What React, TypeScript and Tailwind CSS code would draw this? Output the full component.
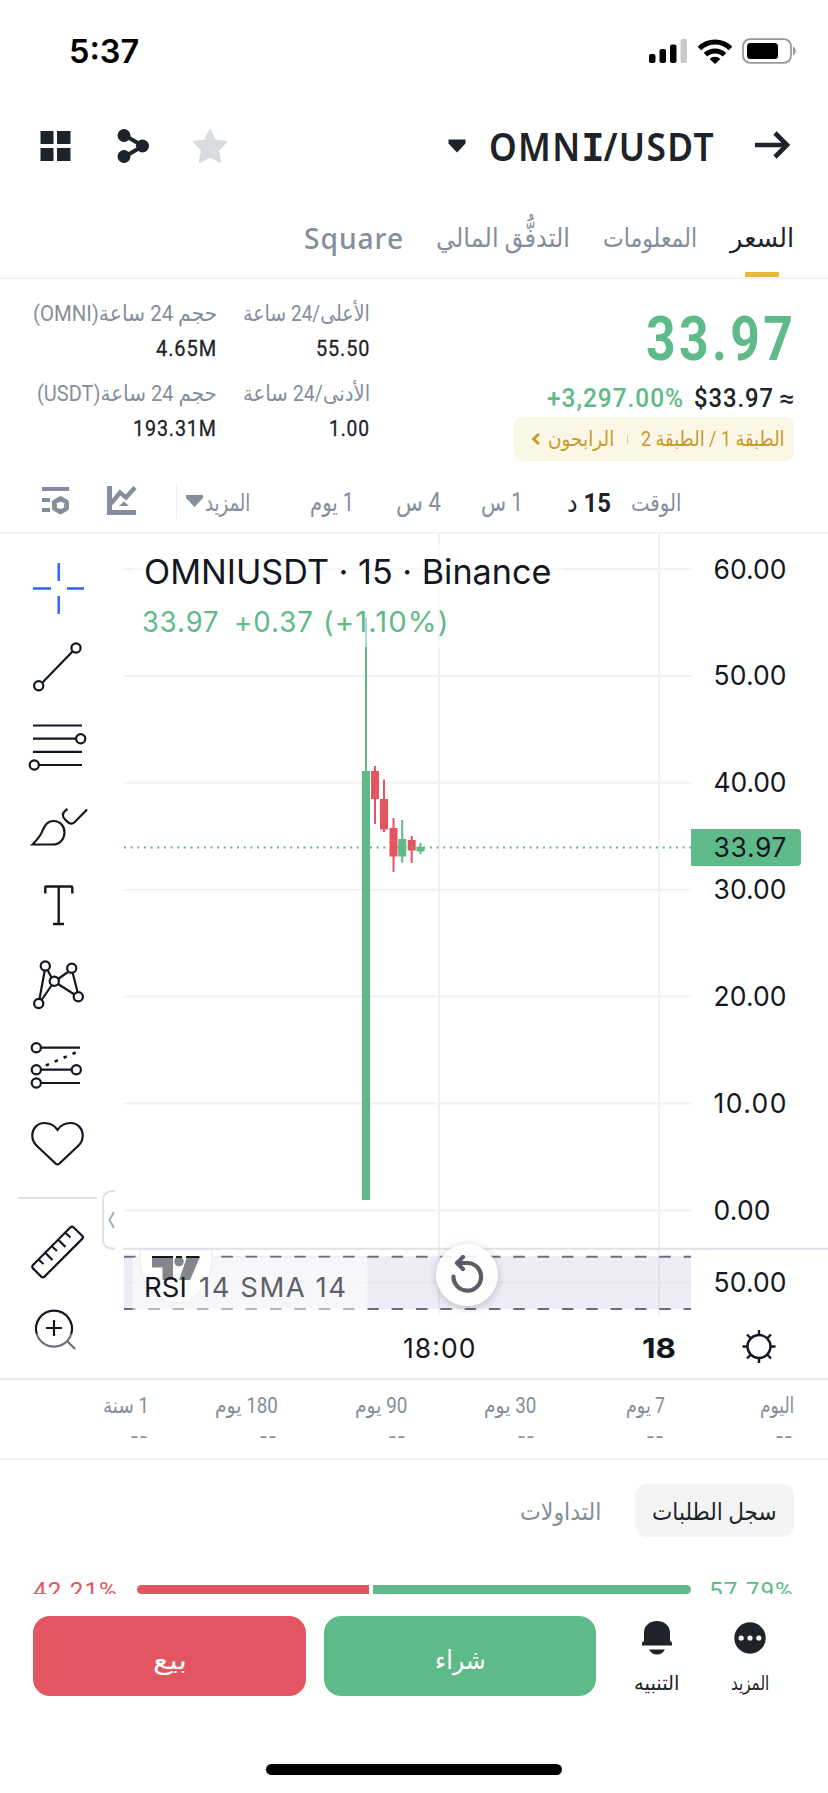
import { useLayoutEffect, useRef, type ReactNode } from "react";

/** Text condensed or widened so that it fills the width of its box. */
function Fit({ className, rtl, children }: { className: string; rtl?: boolean; children: ReactNode }) {
  const box = useRef<HTMLSpanElement>(null);
  const inner = useRef<HTMLSpanElement>(null);
  useLayoutEffect(() => {
    if (!box.current || !inner.current) return;
    const natural = inner.current.offsetWidth;
    if (natural > 0) inner.current.style.transform = `scaleX(${box.current.clientWidth / natural})`;
  });
  return (
    <span ref={box} className={`block shrink-0 whitespace-nowrap ${className}`}>
      <span ref={inner} dir={rtl ? "rtl" : "ltr"} className="inline-block origin-left">
        {children}
      </span>
    </span>
  );
}

function StatusBar() {
  return (
    <div className="flex h-[102px] items-center pl-[69px] pr-[32px] text-black">
      <Fit className="w-[70px] font-['Inter'] text-[33px] font-semibold leading-[40px]">5:37</Fit>
      <svg className="ml-auto h-[26px] w-[148px]" viewBox="648 38 148 26">
        <rect x="649" y="54" width="6.5" height="9" rx="2" />
        <rect x="659.5" y="49" width="6.5" height="14" rx="2" />
        <rect x="670" y="44.500" width="6.5" height="18.500" rx="2" />
        <rect x="680.500" y="39" width="6.500" height="24" rx="2" fill="#c9c9c9" />
        <g fill="none" stroke="#000" strokeWidth="5">
          <path d="M699.500 48.500a22 22 0 0 1 31 0" />
          <path d="M705.500 54.800a13.500 13.500 0 0 1 19 0" />
        </g>
        <path d="M709.600 59a7.600 7.600 0 0 1 10.800 0l-5.400 5z" />
        <rect x="743" y="39.200" width="48" height="23.600" rx="7" fill="none" stroke="#999" strokeWidth="1.800" />
        <rect x="747" y="43" width="31" height="16" rx="3.500" />
        <path d="M793 46.500c3.500 1.500 3.500 7.500 0 9z" fill="#999" />
      </svg>
    </div>
  );
}

function Header() {
  return (
    <div className="flex h-[87px] items-center pl-[40px] pr-[38px] text-[#1e2329]">
      <svg className="h-[36px] w-[190px]" viewBox="40 128 190 36" fill="#1e2329">
        <path d="M40.500 131h13v13h-13zM57 131h13.500v13H57zM40.500 148h13v13h-13zM57 148h13.500v13H57z" />
        <path d="M124 135l19 11-19 11" fill="none" stroke="#1e2329" strokeWidth="4" />
        <circle cx="124" cy="135.500" r="6.500" />
        <circle cx="142.500" cy="146" r="6.500" />
        <circle cx="124" cy="156.500" r="6.500" />
        <path
          d="M210 130l5 10.500 11 1.500-8 8 2.200 11.800L210 156.500l-10.200 5.300L202 150l-8-8 11-1.500z"
          fill="#d8dbe0"
          stroke="#d8dbe0"
          strokeWidth="2"
          strokeLinejoin="round"
        />
      </svg>
      <svg className="ml-auto h-[14px] w-[18px]" viewBox="0 0 18 14">
        <path d="M.500 .5h17v4L9 13.500.500 4.500z" fill="#1e2329" />
      </svg>
      <Fit className="ml-[23px] w-[226px] font-['Noto_Sans'] text-[39px] font-semibold leading-[48px] tracking-[1.500px]">
        OMN<span className="font-['Liberation_Mono'] text-[42px] font-bold leading-[40px] tracking-[-1px]">I</span>/USDT
      </Fit>
      <svg className="ml-[40px] mb-[2px] h-[28px] w-[35px]" viewBox="0 0 35 28" fill="none" stroke="#1e2329" strokeWidth="4.600">
        <path d="M0 14h31M20 2l12 12-12 12" />
      </svg>
    </div>
  );
}

function PageTabs() {
  return (
    <div className="flex h-[90px] border-b-2 border-[#f3f4f5] pl-[304px] pr-[34px] text-[#848e9c]">
      <Fit className="mt-[28px] w-[100px] font-['Noto_Sans'] text-[29px] font-medium leading-[42px] tracking-[1px]">Square</Fit>
      <Fit rtl className="ml-[32px] mt-[28px] w-[134px] text-[26px] leading-[42px]">التدفُّق المالي</Fit>
      <Fit rtl className="ml-[33px] mt-[28px] w-[94px] text-[26px] leading-[42px]">المعلومات</Fit>
      <div className="ml-[33px] flex w-[64px] flex-col items-center">
        <Fit rtl className="mt-[28px] w-[64px] text-[26px] leading-[42px] text-[#1e2329]">السعر</Fit>
        <span className="mt-[13px] h-[6px] w-[34px] bg-[#e8b93f]" />
      </div>
    </div>
  );
}

function Stat({ label, value, labelWidth, valueWidth }: { label: string; value: string; labelWidth: string; valueWidth: string }) {
  return (
    <div className="flex h-[79.500px] flex-col items-end">
      <Fit rtl className={`${labelWidth} text-[22px] leading-[34px] text-[#848e9c]`}>{label}</Fit>
      <Fit className={`${valueWidth} mt-[1px] text-[22px] leading-[34px] tracking-[1px] text-[#1e2329] [-webkit-text-stroke:0.3px_#1e2329]`}>{value}</Fit>
    </div>
  );
}

function Summary() {
  return (
    <div className="flex h-[190px] pl-[34px] pr-[34px]">
      <div className="flex w-[183px] flex-col pt-[18px]">
        <Stat label="حجم 24 ساعة(OMNI)" value="4.65M" labelWidth="w-[184px]" valueWidth="w-[61px]" />
        <Stat label="حجم 24 ساعة(USDT)" value="193.31M" labelWidth="w-[180px]" valueWidth="w-[84px]" />
      </div>
      <div className="ml-[26px] flex w-[127px] flex-col pt-[18px]">
        <Stat label="الأعلى/24 ساعة" value="55.50" labelWidth="w-[127px]" valueWidth="w-[54px]" />
        <Stat label="الأدنى/24 ساعة" value="1.00" labelWidth="w-[127px]" valueWidth="w-[41px]" />
      </div>
      <div className="ml-auto flex flex-col items-end">
        <Fit className="mr-[-2px] mt-[23px] w-[150px] text-[62px] font-bold leading-[74px] tracking-[4px] text-[#5fba89]">33.97</Fit>
        <div className="mt-[6px] flex items-center font-medium">
          <Fit className="w-[137px] text-[25px] leading-[34px] tracking-[1px] text-[#5fba89]">+3,297.00%</Fit>
          <Fit className="ml-[10px] w-[80px] text-[25px] leading-[34px] tracking-[1px] text-[#1e2329]">$33.97</Fit>
          <Fit className="ml-[5px] w-[15px] text-[25px] leading-[34px] text-[#1e2329]">≈</Fit>
        </div>
        <div className="mt-[1px] flex h-[44px] w-[280px] items-center rounded-[8px] bg-[#fbf7e6] pl-[17px] text-[#c99a2c]">
          <svg className="h-[12px] w-[9px]" viewBox="0 0 9 12" fill="none" stroke="#c99a2c" strokeWidth="2.800">
            <path d="M8 1L2.500 6 8 11" />
          </svg>
          <Fit rtl className="ml-[8px] w-[66px] text-[21px] leading-[34px]">الرابحون</Fit>
          <span className="ml-[13px] h-[9px] w-px bg-[#e2cd95]" />
          <Fit rtl className="ml-[13px] w-[144px] text-[21px] leading-[34px]">الطبقة 1 / الطبقة 2</Fit>
        </div>
      </div>
    </div>
  );
}

function Intervals() {
  return (
    <div className="flex h-[65px] items-center border-b-2 border-[#f3f4f5] pl-[41px] text-[#848e9c]">
      <svg className="h-[30px] w-[96px]" viewBox="41 487 96 30">
        <path d="M42 488h27v4H42zM42 499h8v4h-8zM42 509h8v4h-8z" fill="#848e9c" />
        <path d="M60.500 499.500l6 3.500v6.500l-6 3.500-6-3.500V503z" fill="none" stroke="#848e9c" strokeWidth="4.800" strokeLinejoin="round" />
        <path d="M109.500 487v26.500H136" fill="none" stroke="#848e9c" strokeWidth="5" />
        <path d="M111 504.500l9-11 6 5 9-10" fill="none" stroke="#848e9c" strokeWidth="4.400" />
        <path d="M124 502.500l5 4.500h-10z" fill="#848e9c" />
      </svg>
      <span className="ml-[39px] h-[36px] w-px bg-[#eceef0]" />
      <svg className="ml-[9px] h-[12px] w-[17px]" viewBox="0 0 17 12">
        <path d="M0 0h17v3l-8.500 9L0 3z" fill="#848e9c" />
      </svg>
      <div className="flex pt-[5px]">
        <Fit rtl className="ml-[2px] w-[45px] text-[24px] leading-[34px]">المزيد</Fit>
        <Fit rtl className="ml-[60px] w-[44px] text-[25px] leading-[34px]">1 يوم</Fit>
        <Fit rtl className="ml-[42px] w-[45px] text-[25px] leading-[34px]">4 س</Fit>
        <Fit rtl className="ml-[40px] w-[42px] text-[25px] leading-[34px]">1 س</Fit>
        <Fit rtl className="ml-[44px] w-[44px] text-[26px] leading-[34px] text-[#1e2329]">
          <b className="font-bold">15</b> د
        </Fit>
        <Fit rtl className="ml-[20px] w-[50px] text-[24px] leading-[34px]">الوقت</Fit>
      </div>
    </div>
  );
}

const INK = "#131722";

function Toolbar() {
  return (
    <div className="flex w-[123px] pt-[15px]">
      <div className="flex w-[97px] flex-col">
        <svg className="h-[80px] w-[97px]" viewBox="0 549 97 80" stroke="#2962ff" strokeWidth="2.400">
          <path d="M33 588.500h18M67 588.500h17M58.700 563v18M58.700 596v18" />
        </svg>
        <svg className="h-[77px] w-[97px]" viewBox="0 629 97 77" fill="none" stroke={INK} strokeWidth="2.200">
          <path d="M42.500 682.500l30-31" />
          <circle cx="76" cy="648" r="4.600" />
          <circle cx="38.700" cy="685.700" r="4.600" />
        </svg>
        <svg className="h-[80px] w-[97px]" viewBox="0 706 97 80" fill="none" stroke={INK} strokeWidth="2.200">
          <path d="M33 725.500h49M33 738.700h43M33 751.800h49M39 765h43" />
          <circle cx="80.700" cy="738.700" r="4.600" />
          <circle cx="34.300" cy="765" r="4.600" />
        </svg>
        <svg className="h-[80px] w-[97px]" viewBox="0 786 97 80" fill="none" stroke={INK} strokeWidth="2.200">
          <path d="M32.500 844.500c4-4 8.500-9 10.500-15 2.200-5.500 6-8.500 10.500-8.500 6.500 0 11 5 11 11.500s-5 12-11.500 12z" />
          <path d="M67.500 809c-4 2.500-5.500 5.500-4 8.500 1.500 2.500 3.500 4 5.500 5.500 2 1 3.800.800 5.500-.700L87 809.500" />
        </svg>
        <svg className="h-[78px] w-[97px]" viewBox="0 866 97 78" fill="none" stroke={INK} strokeWidth="2.400">
          <path d="M45.300 893.500v-6q0-1 1-1h25q1 0 1 1v6M58.700 886.500v37.500M53 924h11" />
        </svg>
        <svg className="h-[80px] w-[97px]" viewBox="0 944 97 80" fill="none" stroke={INK} strokeWidth="2.200">
          <path d="M44.700 970.500L39.500 999M47.500 970l4 7.500M51.500 985.500L41.500 1000M58 979l10-7M72.700 973l5 19.500M58 984l16.500 10.500" />
          <circle cx="45.300" cy="966" r="4.600" />
          <circle cx="71.700" cy="968.300" r="4.600" />
          <circle cx="54.300" cy="981.300" r="4.600" />
          <circle cx="38.700" cy="1003.500" r="4.600" />
          <circle cx="78.300" cy="996.800" r="4.600" />
        </svg>
        <svg className="h-[80px] w-[97px]" viewBox="0 1024 97 80" fill="none" stroke={INK} strokeWidth="2.200">
          <path d="M41 1047.700h39M41 1069.700h30.500M41 1083h39" />
          <path d="M45.800 1065.500l30-13" strokeWidth="2.600" strokeDasharray="3.500 6.200" />
          <circle cx="36.300" cy="1047.700" r="4.600" />
          <circle cx="36.300" cy="1069.700" r="4.600" />
          <circle cx="76.300" cy="1069.700" r="4.600" />
          <circle cx="36.300" cy="1083" r="4.600" />
        </svg>
        <svg className="h-[93px] w-[97px]" viewBox="0 1104 97 93" fill="none" stroke={INK} strokeWidth="2.200">
          <path d="M57.500 1129.800C54 1125 49.500 1123 44.500 1123c-7 0-12.200 5.500-12.200 12.500 0 4 1.700 7.500 4.200 10l19 18q2 2 4 0l19-18c2.700-2.500 4.200-6 4.200-10 0-7-5.200-12.500-12.200-12.500-5 0-9.500 2-13 6.800z" />
        </svg>
        <span className="ml-[18px] h-[2px] w-[79px] bg-[#dfe1e7]" />
        <svg className="h-[91px] w-[97px]" viewBox="0 1199 97 91" fill="none" stroke={INK} strokeWidth="2.200">
          <path d="M70.200 1227.500q1.800-1.500 3.500 0l8.500 8.200q1.500 1.600 0 3.200l-37.700 37.700q-1.700 1.500-3.300 0l-8.200-8.200q-1.500-1.700 0-3.400z" />
          <path d="M38.500 1259.500l5 4.500M45.500 1253l7 7M52 1246.500l5 4.500M58.500 1240l7 7M65.500 1233l5 4.500" />
        </svg>
        <svg className="h-[72px] w-[97px]" viewBox="0 1290 97 72" fill="none" stroke={INK} strokeWidth="2.200">
          <path d="M46 1328h16M54 1320v16" />
          <path d="M36.800 1334a18 18 0 1 1 34.400 0" />
          <path d="M36.800 1334a18 18 0 0 0 34.400 0M67 1341l8 8" stroke="#6c6f77" />
        </svg>
      </div>
      <svg className="ml-[4px] mt-[640px] h-[62px] w-[16px]" viewBox="101 1189 16 62" fill="none">
        <path d="M115 1191h-3q-9 1-9 9v40q0 8 9 8.500h3" stroke="#dfe1e7" strokeWidth="2" />
        <path d="M114 1212l-4.500 8 4.500 8" stroke="#9fb0bd" strokeWidth="2" />
      </svg>
    </div>
  );
}

const PRICES = ["60.00", "50.00", "40.00", "30.00", "20.00", "10.00", "0.00"];
const UP = "#5fba89";
const DOWN = "#e25561";
const CANDLES = [
  { x: 366, high: 618, low: 771, top: 771, bottom: 1200, color: UP },
  { x: 375, high: 766, low: 824, top: 771, bottom: 799, color: DOWN },
  { x: 384, high: 779.5, low: 832, top: 799, bottom: 829.5, color: DOWN },
  { x: 393.5, high: 818, low: 872, top: 828, bottom: 856.5, color: DOWN },
  { x: 402.2, high: 820, low: 862.5, top: 839, bottom: 856.5, color: UP },
  { x: 411.7, high: 836, low: 863, top: 840, bottom: 850.5, color: DOWN },
  { x: 420.5, high: 843, low: 854, top: 847, bottom: 851.5, color: UP },
];

function Chart() {
  return (
    <svg className="h-[844px] w-[705px] font-['Inter']" viewBox="123 534 705 844" fontSize="26.500">
      <g stroke="#f0f1f3" strokeWidth="2">
        {PRICES.map((p, i) => (
          <path key={p} d={`M124 ${569 + i * 106.9}H691`} />
        ))}
        <path d="M439 534V1315M659 534V1315" />
      </g>
      <rect x="124" y="1256" width="567" height="53" fill="#9c88cf" opacity=".16" />
      <path d="M124 1282.500H691" stroke="#e6e4ec" strokeWidth="1.500" />
      <g stroke="#6e6c7a" strokeWidth="2" strokeDasharray="11.500 12.830">
        <path d="M124 1256.700H691" />
        <path d="M124 1309H691" />
      </g>
      <rect x="132.500" y="1257.500" width="235" height="53" fill="#fff" opacity=".5" />
      <path d="M140.500 1249.500h71c4 27-12 53.500-35.500 53.500s-39.500-26.500-35.500-53.500z" fill="#fff" stroke="#f0eff3" strokeWidth="1.800" />
      <path d="M152 1257h21v23h-10.500v-12.500H152zM187 1257h13l-10 23h-11z" fill="#85868c" />
      <circle cx="179" cy="1261.500" r="4.800" fill="#85868c" />
      <path d="M152 1257h21M176 1257h6M186 1257h13.500" stroke={INK} strokeWidth="2" />
      <path d="M123 1248.700H828" stroke="#dfe1e9" strokeWidth="2" />
      <g fill={INK}>
        <text x="144" y="1297" fontSize="27.500" textLength="43">RSI</text>
        <text x="199" y="1297" fontSize="27.500" textLength="147" fill="#5d6068">14 SMA 14</text>
      </g>
      <path d="M124 847.500H691" stroke={UP} strokeWidth="2" strokeDasharray="2 4.650" />
      {CANDLES.map((c) => (
        <g key={c.x}>
          <path d={`M${c.x} ${c.high}V${c.low}`} stroke={c.color} strokeWidth="2" />
          <rect x={c.x - 4} y={c.top} width="8" height={c.bottom - c.top} fill={c.color} />
        </g>
      ))}
      <path d="M398 847.500h27" stroke={UP} strokeWidth="2" strokeDasharray="2 4.650" />
      <path d="M691 829h106q4 0 4 4v29q0 4-4 4H691z" fill={UP} />
      <g fill={INK}>
        {PRICES.map((p, i) => (
          <text key={p} x="713.500" y={578.5 + i * 106.9} textLength={p.length === 5 ? 73 : 57}>{p}</text>
        ))}
        <text x="713.500" y="857" textLength="73">33.97</text>
        <text x="713.500" y="1292" textLength="73">50.00</text>
        <text x="403" y="1358" textLength="72.500">18:00</text>
        <text x="642" y="1358" fontSize="27.500" textLength="34" lengthAdjust="spacingAndGlyphs" fontWeight="700">18</text>
      </g>
      <g fill="none" stroke={INK} strokeWidth="2.400">
        <circle cx="759" cy="1346.500" r="11.500" />
        <path d="M759 1335v-5M759 1358v5M747.500 1346.500h-5M770.500 1346.500h5M751 1338.500l-4-4M767 1338.500l4-4M751 1354.500l-4 4M767 1354.500l4 4" />
      </g>
    </svg>
  );
}

function ChartPanel() {
  return (
    <div className="relative flex h-[846px] border-b-2 border-[#e6e8ed]">
      <Toolbar />
      <Chart />
      <div className="absolute left-[132px] top-[11px] h-[52px] bg-white/50 pl-[12px] pr-[12px] pt-[5px] text-[#131722]">
        <Fit className="w-[407px] font-['Inter'] text-[34px] leading-[44px]">OMNIUSDT · 15 · Binance</Fit>
      </div>
      <div className="absolute left-[132px] top-[63px] flex h-[50px] bg-white/50 pl-[10px] pr-[10px] pt-[6px] font-['Inter'] text-[28px] leading-[38px] text-[#5fba89]">
        <Fit className="w-[78px] tracking-[1px]">33.97</Fit>
        <Fit className="ml-[14px] w-[80px] tracking-[1px]">+0.37</Fit>
        <Fit className="ml-[9px] w-[127px] tracking-[1px]">(+1.10%)</Fit>
      </div>
      <div className="absolute left-[436px] top-[710px] flex h-[62px] w-[62px] items-center justify-center rounded-full bg-white/90 shadow-[0_2px_8px_rgba(0,0,0,0.22)]">
        <svg className="h-[40px] w-[36px]" viewBox="0 0 36 40" fill="none" stroke="#5a5c66" strokeWidth="4.200" strokeLinecap="round" strokeLinejoin="round">
          <path d="M4.500 21.500a13.800 13.800 0 1 0 13.800-13.500H8M14 2L8 8l6 6" />
        </svg>
      </div>
    </div>
  );
}

const PERIODS = [
  { label: "1 سنة", width: "w-[46px]" },
  { label: "180 يوم", width: "w-[63px]" },
  { label: "90 يوم", width: "w-[52px]" },
  { label: "30 يوم", width: "w-[52px]" },
  { label: "7 يوم", width: "w-[39px]" },
  { label: "اليوم", width: "w-[34px]" },
];

function Periods() {
  return (
    <div className="grid h-[80px] grid-cols-6 border-b-2 border-[#eff0f2] pl-[20px] pr-[34px] text-[#848e9c]">
      {PERIODS.map((p) => (
        <div key={p.label} className="flex flex-col items-end">
          <Fit rtl className={`${p.width} mt-[9px] text-[22px] leading-[34px]`}>{p.label}</Fit>
          <Fit className="mt-[2px] w-[18px] text-[22px] leading-[24px] tracking-[2px]">--</Fit>
        </div>
      ))}
    </div>
  );
}

function Orders() {
  return (
    <div className="h-[134px] overflow-hidden">
      <div className="flex justify-end pr-[34px] pt-[24px]">
        <Fit rtl className="mr-[34px] mt-[10px] w-[81px] text-[24px] leading-[36px] text-[#848e9c]">التداولات</Fit>
        <div className="flex h-[53px] w-[159px] justify-center rounded-[12px] bg-[#f4f4f5]">
          <Fit rtl className="mt-[10px] w-[125px] text-[24px] leading-[36px] text-[#1e2329]">سجل الطلبات</Fit>
        </div>
      </div>
      <div className="mt-[35px] flex h-[40px] pl-[33px] pr-[34px] text-[24px] leading-[38px]">
        <Fit className="w-[85px] tracking-[1px] text-[#e25561]">42.21%</Fit>
        <span className="ml-[19px] mt-[13px] h-[9px] w-[232px] rounded-l-full bg-[#e25561]" />
        <span className="ml-[4px] mt-[13px] h-[9px] w-[318px] rounded-r-full bg-[#5fba89]" />
        <Fit className="ml-[18px] w-[85px] tracking-[1px] text-[#5fba89]">57.79%</Fit>
      </div>
    </div>
  );
}

function ActionBar() {
  return (
    <div className="flex h-[170px] pl-[33px] pt-[22px]">
      <div className="flex h-[80px] w-[273px] justify-center rounded-[17px] bg-[#e25561]">
        <Fit rtl className="mt-[24px] w-[34px] text-[26px] leading-[40px] text-white">بيع</Fit>
      </div>
      <div className="ml-[18px] flex h-[80px] w-[272px] justify-center rounded-[17px] bg-[#5fba89]">
        <Fit rtl className="mt-[24px] w-[51px] text-[26px] leading-[40px] text-white">شراء</Fit>
      </div>
      <div className="ml-[37px] flex w-[47px] flex-col items-center pt-[4px]">
        <svg className="h-[36px] w-[32px]" viewBox="0 0 32 36" fill="#1e2329">
          <path d="M3 12.500C3 5.500 9 1 16 1s13 4.500 13 11.500v8.500l2 1.500v3H1v-3L3 21zM8 29.500h16c-1.500 3-4.500 5-8 5s-6.500-2-8-5z" />
        </svg>
        <Fit rtl className="mt-[12px] w-[46px] text-[20px] leading-[30px] text-[#1e2329]">التنبيه</Fit>
      </div>
      <div className="ml-[50px] flex w-[39px] flex-col items-center pt-[4px]">
        <svg className="h-[36px] w-[32px]" viewBox="0 0 32 36">
          <circle cx="16" cy="18" r="15.700" fill="#1e2329" />
          <g fill="#fff">
            <circle cx="7.200" cy="18" r="2.600" />
            <circle cx="16" cy="18" r="2.600" />
            <circle cx="24.800" cy="18" r="2.600" />
          </g>
        </svg>
        <Fit rtl className="mt-[12px] w-[38px] text-[20px] leading-[30px] text-[#1e2329]">المزيد</Fit>
      </div>
    </div>
  );
}

export default function App() {
  return (
    <div className="flex h-[1793px] w-[828px] flex-col overflow-hidden bg-white font-['Roboto','DejaVu_Sans',sans-serif] [&>*]:shrink-0">
      <StatusBar />
      <Header />
      <PageTabs />
      <Summary />
      <Intervals />
      <ChartPanel />
      <Periods />
      <Orders />
      <ActionBar />
      <div className="mx-auto h-[11px] w-[296px] rounded-full bg-black" />
    </div>
  );
}
